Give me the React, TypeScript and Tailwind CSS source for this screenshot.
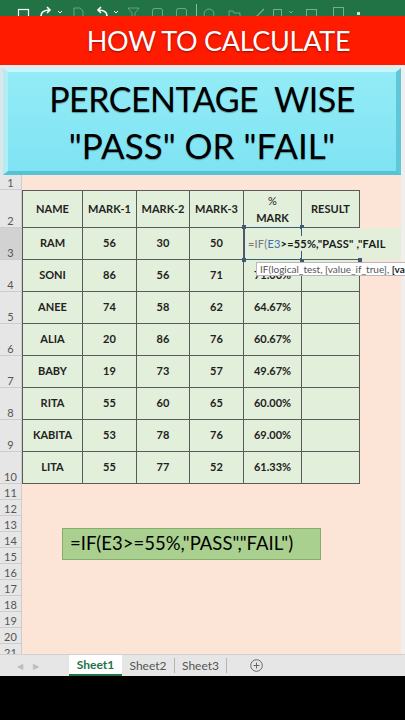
import React from "react";

const colW = ["w-[61px]", "w-[54px]", "w-[53px]", "w-[54px]", "w-[58px]", "w-[58px]"];

const rows = [
  ["SONI", "86", "56", "71", "71.00%"],
  ["ANEE", "74", "58", "62", "64.67%"],
  ["ALIA", "20", "86", "76", "60.67%"],
  ["BABY", "19", "73", "57", "49.67%"],
  ["RITA", "55", "60", "65", "60.00%"],
  ["KABITA", "53", "78", "76", "69.00%"],
  ["LITA", "55", "77", "52", "61.33%"],
];

function RowHead({ n, dark }: { n: number; dark?: boolean }) {
  return (
    <div
      className={`w-[22px] shrink-0 border-b border-r border-[#cdcdcd] flex items-end justify-center pb-[1px] text-[11px] leading-none text-[#555] ${
        dark ? "bg-[#d2d2d2]" : "bg-[#e6e6e6]"
      }`}
    >
      {n}
    </div>
  );
}

function Cell({ i, children }: { i: number; children?: React.ReactNode }) {
  return (
    <div
      className={`${colW[i]} shrink-0 h-full bg-[#e2efda] border-r border-b border-[#5a5a5a] ${
        i === 0 ? "border-l" : ""
      } flex items-center justify-center text-[11px] font-bold text-[#222]`}
    >
      {children}
    </div>
  );
}

function Toolbar() {
  const s = "stroke-white fill-none";
  return (
    <div className="h-[16px] bg-[#217346] overflow-hidden relative">
      <svg width="405" height="20" viewBox="0 0 405 20" className="absolute left-0 top-0">
        <rect x="18.5" y="9.5" width="10" height="8" className={s} strokeWidth="1.2" />
        <path d="M41 16 C41 11 45 10 50 10 M47 7 L50 10 L47 13" className={s} strokeWidth="1.6" />
        <path d="M58 11 L60 13 L62 11" className={s} strokeWidth="1" />
        <path d="M74 8 h6 l3 3 v8 h-9z" className={s} strokeWidth="1" opacity="0.35" />
        <path d="M107 16 C107 11 103 10 98 10 M101 7 L98 10 L101 13" className={s} strokeWidth="1.6" />
        <path d="M114 11 L116 13 L118 11" className={s} strokeWidth="1" />
        <path d="M128 8 h11 l-4 5 v5 h-3 v-5z" className={s} strokeWidth="1" opacity="0.3" />
        <rect x="152.5" y="8.5" width="10" height="10" rx="2" className={s} strokeWidth="1" opacity="0.35" />
        <rect x="176.5" y="8.5" width="10" height="10" rx="2" className={s} strokeWidth="1" opacity="0.35" />
        <line x1="196.5" y1="4" x2="196.5" y2="18" className={s} strokeWidth="1" opacity="0.5" />
        <circle cx="209" cy="14" r="5" className={s} strokeWidth="1" opacity="0.35" />
        <path d="M229 11 h4 l1 2 h6 v6 h-11z" className={s} strokeWidth="1" opacity="0.35" />
        <path d="M255 18 L264 9" className={s} strokeWidth="1.2" opacity="0.4" />
        <rect x="273.5" y="9.5" width="8" height="9" className={s} strokeWidth="1" opacity="0.4" />
        <path d="M289 11 L291 13 L293 11" className={s} strokeWidth="1" opacity="0.4" />
        <rect x="306.5" y="9.5" width="10" height="9" className={s} strokeWidth="1" opacity="0.4" />
        <rect x="333.5" y="7.5" width="10" height="10" className={s} strokeWidth="1" opacity="0.4" />
        <rect x="357" y="12" width="3" height="3" className="fill-white" opacity="0.8" />
      </svg>
    </div>
  );
}

export default function App() {
  return (
    <div
      className="relative w-[405px] h-[720px] overflow-hidden bg-black flex flex-col"
      style={{ fontFamily: "Lato, 'Open Sans', sans-serif" }}
    >
      <Toolbar />

      {/* red banner */}
      <div className="h-[49px] bg-[#fe1b00] flex items-center justify-center pl-[32px]">
        <span className="text-white text-[27px] leading-none tracking-[-0.3px] [text-shadow:0_1px_2px_rgba(90,0,0,0.6)]">
          HOW TO CALCULATE
        </span>
      </div>

      <div className="flex">
        <div className="w-[401px] flex flex-col">
          <div className="h-[3px] bg-[#e9e9e9]" />

          {/* cyan title */}
          <div className="h-[107px] bg-[#dde6e8] pl-[3px]">
            <div className="h-full border-t-[4px] border-l-[5px] border-b-[4px] border-r-[5px] border-t-[#c9f6fc] border-l-[#b4ecf4] border-b-[#55c3d4] border-r-[#5ec8d8] bg-gradient-to-b from-[#93ecf7] to-[#7fe3f3] flex flex-col items-center justify-center text-black text-[34px] leading-[46px] tracking-[-0.5px] [text-shadow:0_1px_1px_rgba(0,0,0,0.35)]">
              <div className="whitespace-pre">PERCENTAGE  WISE</div>
              <div className="text-[35px] tracking-[0px]">"PASS" OR "FAIL"</div>
            </div>
          </div>

          {/* grid */}
          <div className="h-[479px] overflow-hidden flex flex-col bg-[#fce4d6]">
            {/* row 1 */}
            <div className="h-[15px] flex shrink-0">
              <RowHead n={1} />
              <div className="flex-1" />
            </div>

            {/* row 2 header */}
            <div className="h-[38px] flex shrink-0">
              <RowHead n={2} />
              <div className="flex h-full border-t border-[#5a5a5a]">
                <Cell i={0}>NAME</Cell>
                <Cell i={1}>MARK-1</Cell>
                <Cell i={2}>MARK-2</Cell>
                <Cell i={3}>MARK-3</Cell>
                <Cell i={4}>
                  <div className="flex flex-col items-center leading-[17px]">
                    <span className="font-normal">%</span>
                    <span>MARK</span>
                  </div>
                </Cell>
                <Cell i={5}>RESULT</Cell>
              </div>
              <div className="flex-1" />
            </div>

            {/* row 3 editing */}
            <div className="h-[32px] flex shrink-0">
              <RowHead n={3} dark />
              <div className="flex h-full">
                <Cell i={0}>RAM</Cell>
                <Cell i={1}>56</Cell>
                <Cell i={2}>30</Cell>
                <Cell i={3}>50</Cell>
                <div className="w-[58px] shrink-0 h-full bg-[#e2efda] border-b border-[#5a5a5a] relative">
                  <div className="absolute left-0 -top-px w-[58px] h-[33px] border border-[#3d5b73]" />
                  <div className="absolute -left-[2px] -top-[3px] w-[4px] h-[4px] bg-[#3d5b73]" />
                  <div className="absolute -right-[2px] -top-[3px] w-[4px] h-[4px] bg-[#3d5b73]" />
                  <div className="absolute -left-[2px] -bottom-[3px] w-[4px] h-[4px] bg-[#3d5b73]" />
                  <div className="absolute -right-[2px] -bottom-[3px] w-[4px] h-[4px] bg-[#3d5b73]" />
                  <span className="absolute z-10 left-[4px] top-[8px] whitespace-nowrap bg-[#e2efda] text-[11px] font-bold text-[#1a1a1a] leading-[15px] tracking-[0.2px]">
                    <span className="font-normal text-[#777]">=IF(</span>
                    <span className="font-normal text-[#3a6fb0]">E3</span>
                    {'>=55%,"PASS" ,"FAIL'}
                  </span>
                </div>
                <div className="w-[58px] shrink-0 h-full bg-[#e2efda] border-b border-[#5a5a5a] relative">
                  <div className="absolute -right-[2px] -bottom-[3px] w-[4px] h-[4px] bg-[#3d5b73]" />
                </div>
              </div>
              <div className="flex-1 bg-[#e4efdb]" />
            </div>

            {/* rows 4-10 */}
            {rows.map((r, idx) => (
              <div key={idx} className="h-[32px] flex shrink-0">
                <RowHead n={idx + 4} />
                <div className="flex h-full">
                  {r.map((v, i) => (
                    <Cell key={i} i={i}>
                      {v}
                    </Cell>
                  ))}
                  <Cell i={5} />
                </div>
                <div className="flex-1" />
              </div>
            ))}

            {/* rows 11-21 */}
            {[11, 12, 13, 14, 15, 16, 17, 18, 19, 20, 21].map((n) => (
              <div key={n} className="h-[16px] flex shrink-0">
                <RowHead n={n} />
                <div className="flex-1" />
              </div>
            ))}
          </div>
        </div>
        <div className="w-[4px] bg-[#efefef]" />
      </div>

      {/* sheet tabs */}
      <div className="h-[22px] bg-[#e6e6e6] border-t border-[#d0d0d0] flex items-stretch text-[12px] shrink-0">
        <div className="w-[69px] flex items-center gap-[10px] pl-[17px] text-[#bdbdbd] text-[8px]">
          <span>◀</span>
          <span>▶</span>
        </div>
        <div className="w-[53px] bg-white border-b-2 border-[#217346] flex items-center justify-center font-bold text-[#217346]">
          Sheet1
        </div>
        <div className="w-[53px] flex items-center justify-center text-[#555] border-r border-[#b5b5b5] my-[3px]">
          Sheet2
        </div>
        <div className="w-[52px] flex items-center justify-center text-[#555] border-r border-[#b5b5b5] my-[3px]">
          Sheet3
        </div>
        <div className="pl-[23px] flex items-center">
          <svg width="13" height="13" viewBox="0 0 13 13">
            <circle cx="6.5" cy="6.5" r="5.8" fill="none" stroke="#666" strokeWidth="1" />
            <path d="M6.5 3.5 V9.5 M3.5 6.5 H9.5" stroke="#666" strokeWidth="1" />
          </svg>
        </div>
      </div>

      <div className="flex-1 bg-black" />

      {/* function tooltip */}
      <div className="absolute top-[262px] left-[256px] h-[14px] w-[160px] bg-white border border-[#b8b8b8] flex items-center pl-[3px] text-[10px] leading-none text-[#555] whitespace-nowrap z-20">
        IF(logical_test, [value_if_true],&nbsp;<b className="text-[#222]">[value_if_false])</b>
      </div>

      {/* formula text box */}
      <div className="absolute top-[528px] left-[62px] w-[259px] h-[32px] bg-[#a9d08e] border border-[#86ad6c] flex items-center pl-[7px] text-[18.5px] text-black z-20">
        =IF(E3&gt;=55%,"PASS","FAIL")
      </div>
    </div>
  );
}
